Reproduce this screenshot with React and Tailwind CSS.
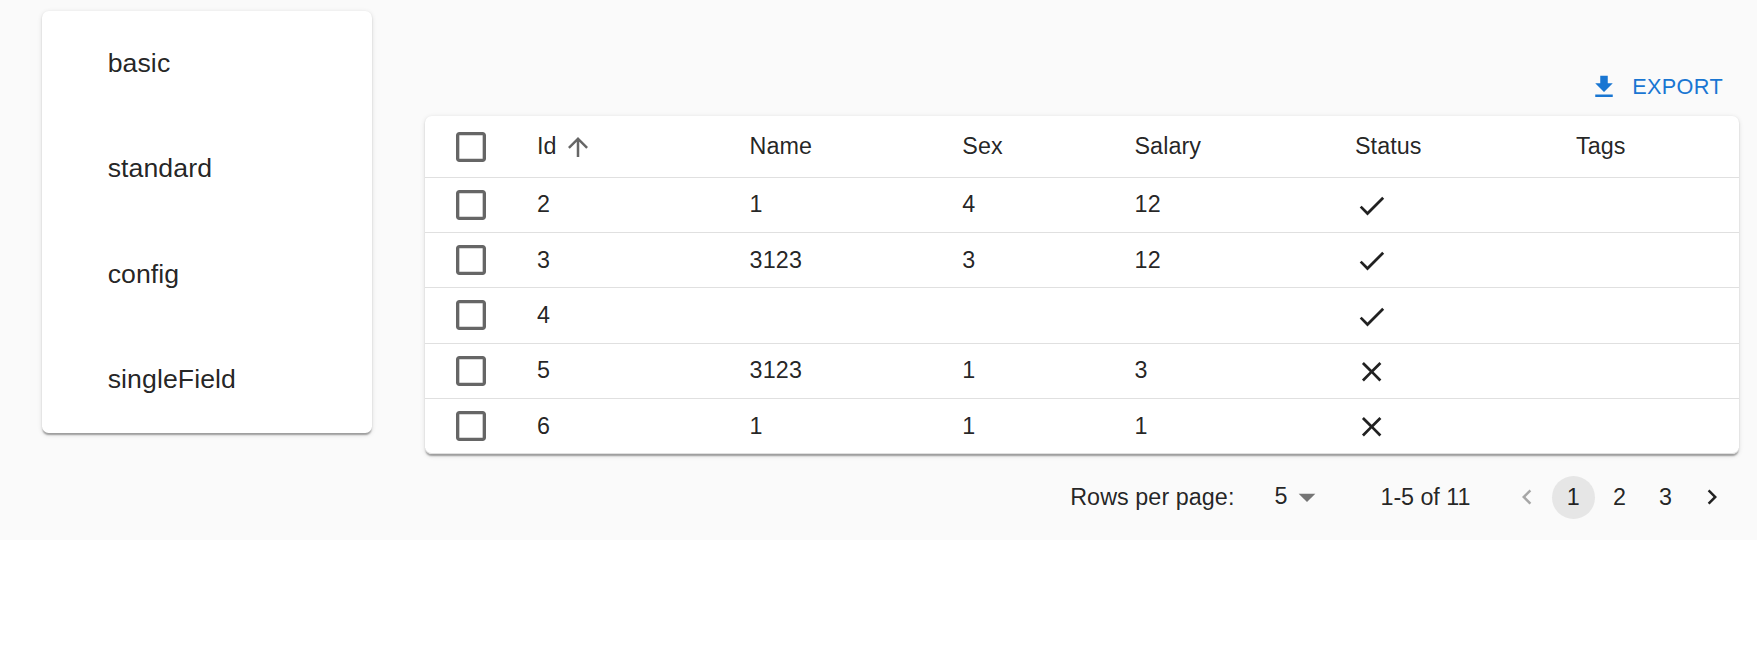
const ICONS = {
  box: 'M19 5v14H5V5h14m0-2H5c-1.1 0-2 .9-2 2v14c0 1.1.9 2 2 2h14c1.1 0 2-.9 2-2V5c0-1.1-.9-2-2-2z',
  up: 'M4 12l1.41 1.41L11 7.83V20h2V7.83l5.58 5.59L20 12l-8-8-8 8z',
  done: 'M9 16.2L4.8 12l-1.4 1.4L9 19 21 7l-1.4-1.4L9 16.2z',
  clear: 'M19 6.41L17.59 5 12 10.59 6.41 5 5 6.41 10.59 12 5 17.59 6.41 19 12 13.41 17.59 19 19 17.59 13.41 12z',
  download: 'M19 9h-4V3H9v6H5l7 7 7-7zM5 18v2h14v-2H5z',
  caret: 'M7 10l5 5 5-5z',
  before: 'M15.41 7.41L14 6l-6 6 6 6 1.41-1.41L10.83 12z',
  next: 'M10 6L8.59 7.41 13.17 12l-4.58 4.59L10 18l6-6z',
};

function Icon({ name, className }) {
  return (
    <svg viewBox="0 0 24 24" fill="currentColor" className={`shrink-0 ${className}`}>
      <path d={ICONS[name]} />
    </svg>
  );
}

const NAV = ['basic', 'standard', 'config', 'singleField'];

const ROWS = [
  { id: 2, name: '1', sex: '4', salary: '12', status: true },
  { id: 3, name: '3123', sex: '3', salary: '12', status: true },
  { id: 4, name: '', sex: '', salary: '', status: true },
  { id: 5, name: '3123', sex: '1', salary: '3', status: false },
  { id: 6, name: '1', sex: '1', salary: '1', status: false },
];

const COLS = 'grid grid-cols-[111.9px_212.6px_212.8px_172.2px_220.5px_221px_1fr] items-center border-b border-[#e0e0e0]';
const SHADOW = 'shadow-[0px_3.33px_1.67px_-1.67px_rgba(0,0,0,0.2),0px_1.67px_1.67px_0px_rgba(0,0,0,0.14),0px_1.67px_5px_0px_rgba(0,0,0,0.12)]';

function Checkbox() {
  return <Icon name="box" className="ml-[26px] size-10 text-[#666]" />;
}

function Cell({ children }) {
  return <div className="group-last:pt-[1.6px]">{children}</div>;
}

export default function App() {
  return (
    <div className="h-[654px] bg-white font-['Liberation_Sans',Arial,sans-serif] text-black/87">
      <div className="flex h-[540px] items-start bg-[#fafafa] pl-[42px]">
        <nav className={`mt-[11px] h-[422px] w-[330px] rounded-[6.67px] bg-white ${SHADOW}`}>
          {NAV.map((item) => (
            <a key={item} className="flex h-[105.5px] items-center pb-[2px] pl-[65.67px] text-[26.67px] leading-10 tracking-[0.08px]">
              {item}
            </a>
          ))}
        </nav>

        <main className="ml-[53px] w-[1314px]">
          <div className="flex h-[116px] items-start justify-end pt-[72px] pr-[16px]">
            <button className="flex items-center gap-[13.33px] text-[21.67px] leading-[30px] tracking-[0.35px] text-[#1976d2]">
              <Icon name="download" className="size-[30px]" />
              EXPORT
            </button>
          </div>

          <div className={`rounded-[6.67px] bg-white text-[23.33px] leading-[33.33px] tracking-[0.2px] ${SHADOW}`}>
            <div className={`${COLS} h-[62px] tracking-[0.08px]`}>
              <Checkbox />
              <div className="flex items-center gap-[6.67px]">
                Id
                <Icon name="up" className="mt-px size-[30px] text-[#666]" />
              </div>
              <div>Name</div>
              <div>Sex</div>
              <div>Salary</div>
              <div>Status</div>
              <div>Tags</div>
            </div>
            {ROWS.map((row) => (
              <div key={row.id} className={`group ${COLS} h-[55.2px] last:rounded-b-[6.67px]`}>
                <Checkbox />
                <Cell>{row.id}</Cell>
                <Cell>{row.name}</Cell>
                <Cell>{row.sex}</Cell>
                <Cell>{row.salary}</Cell>
                <div className="pt-[1.4px]">
                  <Icon name={row.status ? 'done' : 'clear'} className="size-[33.33px]" />
                </div>
                <div />
              </div>
            ))}
          </div>

          <div className="flex h-[86px] items-center justify-end pt-px pr-[5.5px] text-[23.33px] leading-[33.33px] tracking-[0.06px]">
            <span>Rows per page:</span>
            <div className="ml-[40px] flex items-center">
              <span className="-mt-px">5</span>
              <Icon name="caret" className="size-10 text-[#757575]" />
            </div>
            <span className="ml-[53px] tracking-[-0.06px]">1-5 of 11</span>
            <div className="ml-[35px] flex items-center gap-[2.9px]">
              <button className="flex size-[43.33px] items-center justify-center opacity-38">
                <Icon name="before" className="size-[30px]" />
              </button>
              <button className="flex size-[43.33px] items-center justify-center rounded-full bg-[#e6e6e6]">1</button>
              <button className="flex size-[43.33px] items-center justify-center">2</button>
              <button className="flex size-[43.33px] items-center justify-center">3</button>
              <button className="flex size-[43.33px] items-center justify-center">
                <Icon name="next" className="size-[30px]" />
              </button>
            </div>
          </div>
        </main>
      </div>
    </div>
  );
}
